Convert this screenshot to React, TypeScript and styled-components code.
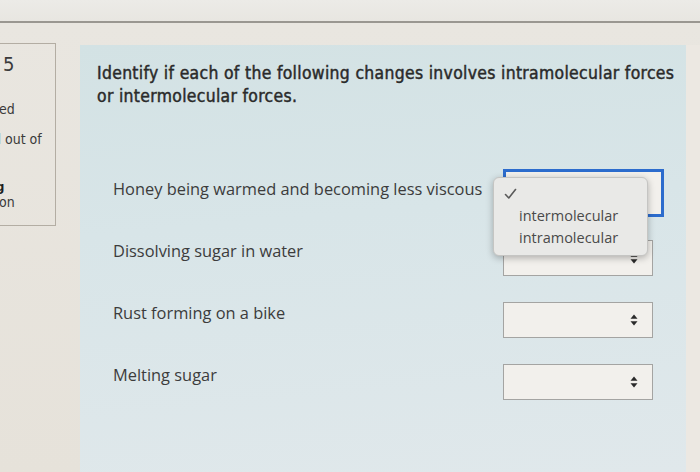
import React from 'react';
import styled, { createGlobalStyle } from 'styled-components';

const GlobalStyle = createGlobalStyle`
  html, body {
    margin: 0;
    padding: 0;
    background: #e7e3dc;
  }
  #root {
    width: 700px;
    height: 472px;
    overflow: hidden;
  }
`;

const rows = [
  { label: 'Honey being warmed and becoming less viscous', focused: true },
  { label: 'Dissolving sugar in water', focused: false },
  { label: 'Rust forming on a bike', focused: false },
  { label: 'Melting sugar', focused: false },
];

const Arrows = () => (
  <svg width='8' height='12' viewBox='0 0 8 12'>
    <path d='M4 0.5 L7.5 4.8 L0.5 4.8 Z' fill='#2a2a2a' />
    <path d='M4 11.5 L7.5 7.2 L0.5 7.2 Z' fill='#2a2a2a' />
  </svg>
);

const Check = () => (
  <svg width='13' height='12' viewBox='0 0 13 12'>
    <path d='M1.5 6.5 L4.8 10 L11.5 1.5' fill='none' stroke='#5a5a5a' strokeWidth='1.6' strokeLinecap='round' strokeLinejoin='round' />
  </svg>
);

export default function App() {
  return (
    <>
      <GlobalStyle />
      <Page>
        <TopStrip />
        <Body>
          <Sidebar>
            <SideLine $top={8} $size={20} $shift={3}>5</SideLine>
            <SideLine $top={23} $size={14} $shift={-1}>ed</SideLine>
            <SideLine $top={11} $size={14} $shift={-7}>
              d out of
            </SideLine>
            <SideLine $top={29} $size={13} $shift={-4} $dark>
              g
            </SideLine>
            <SideLine $top={-3} $size={14} $shift={-1}>
              on
            </SideLine>
          </Sidebar>
          <Panel>
            <Title>
              Identify if each of the following changes involves intramolecular forces
              <br />
              or intermolecular forces.
            </Title>
            <Rows>
              {rows.map((r) => (
                <Row key={r.label}>
                  <Label>{r.label}</Label>
                  <SelectCell>
                    <SelectBox $focused={r.focused}>
                      {!r.focused && (
                        <ArrowSlot>
                          <Arrows />
                        </ArrowSlot>
                      )}
                    </SelectBox>
                    {r.focused && (
                      <Dropdown>
                        <Option $checked>
                          <Check />
                        </Option>
                        <Option>intermolecular</Option>
                        <Option>intramolecular</Option>
                      </Dropdown>
                    )}
                  </SelectCell>
                </Row>
              ))}
            </Rows>
          </Panel>
          <RightEdge />
        </Body>
      </Page>
    </>
  );
}

const Page = styled.div`
  display: flex;
  flex-direction: column;
  width: 700px;
  height: 472px;
  background: #e7e3dc;
`;

const TopStrip = styled.div`
  height: 21px;
  flex-shrink: 0;
  background: linear-gradient(180deg, #ecebe7 0%, #e8e6e1 100%);
  border-bottom: 2px solid #9a9791;
`;

const Body = styled.div`
  display: flex;
  flex: 1;
  padding-top: 22px;
  background: linear-gradient(180deg, #e9e6e0 0%, #e6e2da 100%);
`;

const Sidebar = styled.div`
  width: 56px;
  height: 183px;
  margin-top: -2px;
  flex-shrink: 0;
  box-sizing: border-box;
  border: 1px solid #b3ada3;
  border-left: none;
  overflow: hidden;
  font-family: 'DejaVu Sans Condensed', 'DejaVu Sans', sans-serif;
  color: #3a3a3a;
`;

const SideLine = styled.div<{ $top: number; $size: number; $shift?: number; $dark?: boolean }>`
  margin-top: ${(p) => p.$top}px;
  margin-left: ${(p) => p.$shift ?? 0}px;
  font-size: ${(p) => p.$size}px;
  line-height: ${(p) => p.$size + 5}px;
  white-space: nowrap;
  font-weight: ${(p) => (p.$dark ? 700 : 400)};
  color: ${(p) => (p.$dark ? '#1e1e1e' : '#3a3a3a')};
`;

const Panel = styled.div`
  width: 606px;
  margin-left: 24px;
  flex-shrink: 0;
  padding: 17px 0 0 17px;
  box-sizing: border-box;
  background: linear-gradient(175deg, #d3e2e4 0%, #d8e5e8 40%, #e0e8eb 100%);
`;

const Title = styled.div`
  font-family: 'DejaVu Sans Condensed', 'DejaVu Sans', sans-serif;
  font-weight: 400;
  font-size: 17.4px;
  letter-spacing: 0.32px;
  line-height: 23px;
  color: #2a2a2a;
  -webkit-text-stroke: 0.45px #2a2a2a;
  white-space: nowrap;
`;

const Rows = styled.div`
  display: flex;
  flex-direction: column;
  gap: 26px;
  margin-top: 70px;
  padding-left: 16px;
`;

const Row = styled.div`
  display: grid;
  grid-template-columns: 390px 150px;
  align-items: start;
  height: 36px;
`;

const Label = styled.div`
  font-family: 'Open Sans', sans-serif;
  font-size: 16.4px;
  line-height: 22px;
  color: #3c3c3c;
  white-space: nowrap;
`;

const SelectCell = styled.div`
  position: relative;
  height: 36px;
`;

const SelectBox = styled.div<{ $focused?: boolean }>`
  display: flex;
  align-items: center;
  justify-content: flex-end;
  box-sizing: border-box;
  background: #f2f0ec;
  border: ${(p) => (p.$focused ? '3px solid #2c6ccd' : '1px solid #a4a4a2')};
  height: ${(p) => (p.$focused ? 48 : 36)}px;
  width: ${(p) => (p.$focused ? 161 : 150)}px;
  margin: ${(p) => (p.$focused ? '-9px 0 0 0' : '0')};
`;

const ArrowSlot = styled.span`
  display: flex;
  padding-right: 14px;
`;

const Dropdown = styled.div`
  position: absolute;
  z-index: 2;
  left: -10px;
  top: -1px;
  width: 155px;
  padding: 5px 0 6px 0;
  box-sizing: border-box;
  background: #e9e9e7;
  border: 1px solid #c5c5c3;
  border-radius: 6px;
  box-shadow: 0 2px 7px rgba(0, 0, 0, 0.28);
  font-family: 'Open Sans', sans-serif;
  font-size: 14.5px;
  font-weight: 500;
  color: #4a4a4a;
`;

const Option = styled.div<{ $checked?: boolean }>`
  display: flex;
  align-items: center;
  height: 22px;
  line-height: 22px;
  padding-left: ${(p) => (p.$checked ? 10 : 25)}px;
  white-space: nowrap;
`;

const RightEdge = styled.div`
  flex: 1;
  background: #ece8e2;
`;
